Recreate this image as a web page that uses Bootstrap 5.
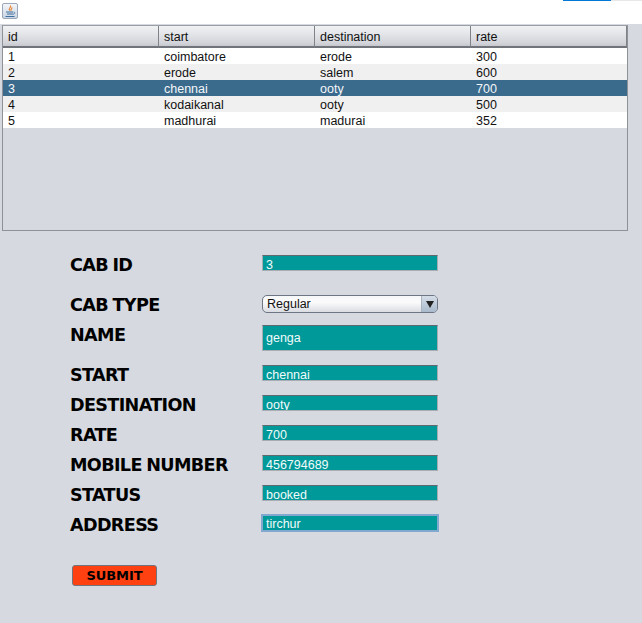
<!DOCTYPE html>
<html lang="en"><head><meta charset="utf-8"><title>Cab</title>
<link rel="stylesheet" href="https://cdn.jsdelivr.net/npm/bootstrap@5.3.0/dist/css/bootstrap.min.css">
<style>
html,body{height:623px;overflow:hidden;background:#d6d9df;font-family:"Liberation Sans",Arial,sans-serif}
.topbar{height:24px;background:#fff;position:relative;padding:3px 0 0 2px}
.strip-a{width:48px;height:1px;background:#0078d7}
.strip-b{width:31px;height:1px;background:#e8e8e8}
.javabtn{width:16px;height:16px;padding:0;background:linear-gradient(#f4f6f9,#c9d4e2);border:1px solid #9aa7b8;border-radius:2px;display:flex;align-items:center;justify-content:center}
.tblwrap{margin:1px 14px 0 2px;height:206px;border:1px solid #8e9196;border-top-color:#9b9ea4;background:#d6d9df;width:626px}
.tbl{table-layout:fixed;width:624px;margin:0;font-size:12.5px;--bs-table-bg:transparent;border-collapse:separate;border-spacing:0}
.tbl th{height:22px;padding:2px 0 0 5px;font-weight:400;color:#111;background:linear-gradient(#f0f1f3 0,#e6e7ea 35%,#d2d4da 85%,#c6c8ce 100%);border:0;border-right:1px solid #7f8288;border-bottom:2px solid #70737a;vertical-align:middle;line-height:14px}
.tbl td{height:16px;padding:2px 0 0 5px;line-height:14px;border:0;background:#fff;color:#111}
.tbl tr.alt td{background:#f0f0f0}
.tbl tr.sel td{background:#3a6a8c;color:#f4f7fa}
.frm{padding:24px 0 0 70px}
.frow{display:flex;align-items:center;height:16px;margin-bottom:14px}
.lbl{width:192px;flex:none;padding-top:4px;font:700 17.6px/20px "DejaVu Sans",Verdana,sans-serif;letter-spacing:-.65px;word-spacing:-1px;color:#000;white-space:nowrap}
.tf{width:176px;height:16px;overflow:hidden;background:#009999;color:#f2fbfb;font-size:12.5px;line-height:14px;padding:2px 0 0 3px;border:1px solid #a9adb3;border-top-color:#5f6a70;border-radius:0;white-space:nowrap;box-sizing:border-box}
.f-cabid{margin-bottom:24px}
.f-type{height:18px;margin-bottom:12px}
.f-type .lbl{padding-top:2px}
.f-name{height:26px}
.f-name .lbl{align-self:flex-start;padding-top:0}
.f-name .tf{height:26px;padding-top:5px}
.f-status{margin-bottom:13px}
.f-addr{height:18px;margin-bottom:33px}
.f-addr .tf{height:18px;width:178px;margin-left:-1px;border:2px solid #82a8cf;padding:1px 0 0 3px}
.combo{width:176px;height:18px;border:1px solid #6d7684;border-radius:5px;background:linear-gradient(#f6f7f9,#fbfbfc 40%,#d9dce2);font-size:12.5px;line-height:16px;padding-left:4px;display:flex;justify-content:space-between;color:#111;overflow:hidden}
.combo-arr{width:16px;background:linear-gradient(#d5dde7,#a9bacd);border-left:1px solid #aab4c0;display:flex;align-items:center;justify-content:center;font-size:0}
.sbm{width:85px;height:21px;margin-left:2px;padding:0;background:#ff4010;border:1px solid #70757b;border-radius:3px;font:700 13px/18px "DejaVu Sans",Verdana,sans-serif;letter-spacing:-.1px;color:#000;display:block}
.sbm:hover{background:#ff4010;color:#000}
</style></head><body>
<div class="topbar">
  <div class="d-flex justify-content-end position-absolute top-0 end-0"><div class="strip-a"></div><div class="strip-b"></div></div>
  <div class="javabtn"><svg width="12" height="13" viewBox="0 0 12 13"><path d="M6.5 0.5C8 2 4.5 3.5 5.5 5.5C4 4 7 2.5 6.5 0.5Z M8 2.5C8.5 3.5 6.5 4.5 7 5.8C6 4.6 8 3.6 8 2.5Z" fill="#e8761a" stroke="#e8761a" stroke-width=".6"/><path d="M2 7h7M3 9h6M1.5 11.5h9" stroke="#3f6f9f" stroke-width="1.1" fill="none"/><path d="M9.5 7c2 0 1.8 2-.5 2.2" stroke="#3f6f9f" fill="none" stroke-width=".8"/></svg></div>
</div>
<div class="tblwrap">
<table class="table tbl">
<colgroup><col style="width:156px"><col style="width:156px"><col style="width:156px"><col style="width:156px"></colgroup>
<thead><tr><th>id</th><th>start</th><th>destination</th><th>rate</th></tr></thead>
<tbody>
<tr><td>1</td><td>coimbatore</td><td>erode</td><td>300</td></tr>
<tr class="alt"><td>2</td><td>erode</td><td>salem</td><td>600</td></tr>
<tr class="sel"><td>3</td><td>chennai</td><td>ooty</td><td>700</td></tr>
<tr class="alt"><td>4</td><td>kodaikanal</td><td>ooty</td><td>500</td></tr>
<tr><td>5</td><td>madhurai</td><td>madurai</td><td>352</td></tr>
</tbody></table>
</div>
<form class="frm" onsubmit="return false">
<div class="frow f-cabid"><div class="lbl">CAB ID</div><div class="form-control tf">3</div></div>
<div class="frow f-type"><div class="lbl">CAB TYPE</div><div class="combo"><span>Regular</span><span class="combo-arr"><svg width="8" height="7" viewBox="0 0 8 7"><path d="M0 0h8L4 7z" fill="#222"/></svg></span></div></div>
<div class="frow f-name"><div class="lbl">NAME</div><div class="form-control tf">genga</div></div>
<div class="frow"><div class="lbl">START</div><div class="form-control tf">chennai</div></div>
<div class="frow"><div class="lbl">DESTINATION</div><div class="form-control tf">ooty</div></div>
<div class="frow"><div class="lbl">RATE</div><div class="form-control tf">700</div></div>
<div class="frow"><div class="lbl">MOBILE NUMBER</div><div class="form-control tf">456794689</div></div>
<div class="frow f-status"><div class="lbl">STATUS</div><div class="form-control tf">booked</div></div>
<div class="frow f-addr"><div class="lbl">ADDRESS</div><div class="form-control tf">tirchur</div></div>
<button type="submit" class="btn sbm">SUBMIT</button>
</form>
<script src="https://cdn.jsdelivr.net/npm/bootstrap@5.3.0/dist/js/bootstrap.bundle.min.js"></script>
</body></html>
